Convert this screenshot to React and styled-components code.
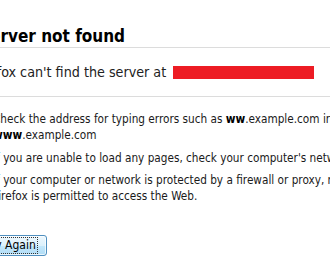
import React from "react";
import styled, { createGlobalStyle } from "styled-components";

const GlobalStyle = createGlobalStyle`
  html, body { margin: 0; padding: 0; background: #fff; overflow: hidden; }
  body { font-family: "DejaVu Sans Condensed", "DejaVu Sans", sans-serif; color: #1a1a1a; }
`;

const Page = styled.div`
  width: 330px;
  height: 270px;
  overflow: hidden;
  position: relative;
`;

const Container = styled.div`
  width: 640px;
  margin-left: -24px;
  padding-top: 26px;
`;

const Title = styled.h1`
  margin: 0;
  padding-left: 3px;
  font-size: 17px;
  line-height: 21px;
  font-weight: bold;
  color: #000;
  border-bottom: 1px solid #dcdcdc;
`;

const ShortDesc = styled.p`
  margin: 0;
  padding: 14px 0 14px 0;
  font-size: 14.2px;
  line-height: 20px;
  color: #222;
  border-bottom: 1px solid #dcdcdc;
  display: flex;
  align-items: center;
  gap: 7px;
`;

const Lead = styled.span`
  margin-left: -2px;
`;

const Redact = styled.span`
  display: inline-block;
  width: 141px;
  height: 13px;
  background: #ed1c24;
`;

const List = styled.ul`
  margin: 14px 0 0 0;
  padding: 0 0 0 17px;
  list-style: none;
  font-size: 11.7px;
  line-height: 16px;
  color: #1a1a1a;
  width: 445px;
`;

const Item = styled.li`
  & + & { margin-top: 6.5px; }
  b { font-weight: bold; color: #000; }
`;

const Button = styled.button`
  margin-top: 31px;
  margin-left: 2px;
  height: 21px;
  padding: 0 9px 0 6px;
  font-family: inherit;
  font-size: 12px;
  color: #000;
  border: 1px solid #4f8fbf;
  border-radius: 3px;
  background: linear-gradient(#eef8fe 0%, #dcf1fc 50%, #c4e8fc 51%, #b0dcf5 100%);
  box-shadow: inset 0 0 0 1px rgba(255,255,255,0.7);
  cursor: default;
`;

const Focus = styled.span`
  display: inline-block;
  padding: 0 1px;
  outline: 1px dotted #333;
  outline-offset: 0;
  line-height: 15px;
`;

export default function App() {
  return (
    <Page>
      <GlobalStyle />
      <Container>
        <Title>Server not found</Title>
        <ShortDesc>
          <Lead>Firefox can't find the server at</Lead>
          <Redact />
        </ShortDesc>
        <List>
          <Item>
            Check the address for typing errors such as <b>ww</b>.example.com instead of <b>www</b>.example.com
          </Item>
          <Item>
            If you are unable to load any pages, check your computer's network connection.
          </Item>
          <Item>
            If your computer or network is protected by a firewall or proxy, make sure that Firefox is permitted to access the Web.
          </Item>
        </List>
        <Button>
          <Focus>Try Again</Focus>
        </Button>
      </Container>
    </Page>
  );
}
